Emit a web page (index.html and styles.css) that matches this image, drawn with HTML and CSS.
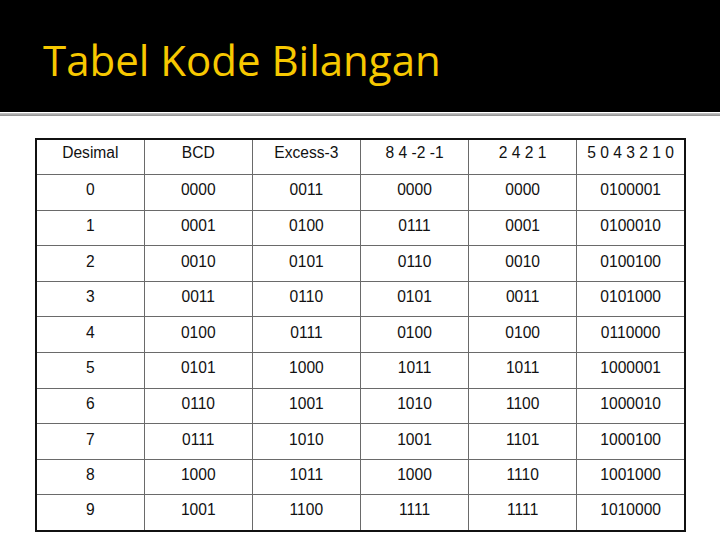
FILE: index.html
```html
<!DOCTYPE html>
<html>
<head>
<meta charset="utf-8">
<link rel="stylesheet" href="styles.css">
</head>
<body>
<div class="header"><h1 class="title">Tabel Kode Bilangan</h1></div>
<div class="rule"></div>
<div class="content">
<table class="codes">
<tr><td>Desimal</td><td>BCD</td><td>Excess-3</td><td>8 4 -2 -1</td><td>2 4 2 1</td><td>5 0 4 3 2 1 0</td></tr>
<tr><td>0</td><td>0000</td><td>0011</td><td>0000</td><td>0000</td><td>0100001</td></tr>
<tr><td>1</td><td>0001</td><td>0100</td><td>0111</td><td>0001</td><td>0100010</td></tr>
<tr><td>2</td><td>0010</td><td>0101</td><td>0110</td><td>0010</td><td>0100100</td></tr>
<tr><td>3</td><td>0011</td><td>0110</td><td>0101</td><td>0011</td><td>0101000</td></tr>
<tr><td>4</td><td>0100</td><td>0111</td><td>0100</td><td>0100</td><td>0110000</td></tr>
<tr><td>5</td><td>0101</td><td>1000</td><td>1011</td><td>1011</td><td>1000001</td></tr>
<tr><td>6</td><td>0110</td><td>1001</td><td>1010</td><td>1100</td><td>1000010</td></tr>
<tr><td>7</td><td>0111</td><td>1010</td><td>1001</td><td>1101</td><td>1000100</td></tr>
<tr><td>8</td><td>1000</td><td>1011</td><td>1000</td><td>1110</td><td>1001000</td></tr>
<tr><td>9</td><td>1001</td><td>1100</td><td>1111</td><td>1111</td><td>1010000</td></tr>
</table>
</div>
</body>
</html>
```
FILE: styles.css
```css
html, body {
  margin: 0;
  padding: 0;
  background: #ffffff;
}
body {
  width: 720px;
  height: 540px;
  overflow: hidden;
}
.header {
  background: #000000;
  height: 112px;
  padding-left: 43px;
  box-sizing: border-box;
  display: flex;
  align-items: flex-start;
}
.title {
  margin: 0;
  margin-top: 34px;
  font-family: "Open Sans", Lato, sans-serif;
  font-weight: 500;
  font-size: 42px;
  line-height: 52px;
  color: #f7c800;
  letter-spacing: 0;
}
.rule {
  margin-top: 1px;
  height: 3px;
  background: linear-gradient(#c8c8c8, #8e8e8e);
}
.content {
  padding-top: 22px;
  padding-left: 35px;
}
.codes {
  border-collapse: collapse;
  border: 2px solid #111111;
  width: 651px;
  table-layout: fixed;
  font-family: "Liberation Sans", Arial, sans-serif;
  font-size: 15.6px;
  color: #111111;
}
.codes tr {
  height: 35.6px;
}
.codes td {
  border: 1.5px solid #6a6a6a;
  padding: 0 0 4px 0;
  text-align: center;
  vertical-align: middle;
}
.codes tr:first-child td {
  padding-bottom: 8px;
}
```
